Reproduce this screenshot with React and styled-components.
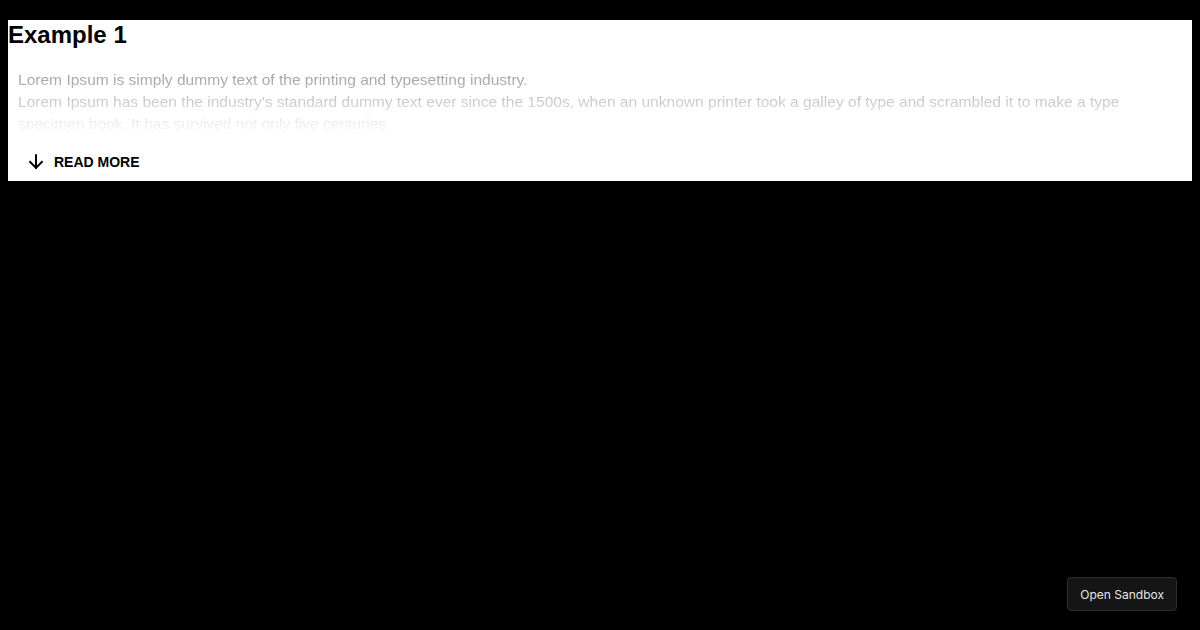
import React from "react";
import styled, { createGlobalStyle } from "styled-components";

const Global = createGlobalStyle`
  html, body { background: #000; }
  body { margin: 0; padding: 20px 8px 8px; font-family: "Liberation Sans", Arial, sans-serif; }
`;

const Card = styled.section`
  background: #fff;
  display: flex;
  flex-direction: column;
`;

const Title = styled.h2`
  margin: 0;
  font-size: 24px;
  line-height: 30px;
  font-weight: 700;
  color: #000;
`;

const Body = styled.div`
  margin-top: 19px;
  padding: 0 10px;
  font-size: 15.55px;
  line-height: 22px;
  color: #999;
  max-height: 66px;
  overflow: hidden;
  -webkit-mask-image: linear-gradient(to bottom, rgba(0,0,0,1) 0%, rgba(0,0,0,0) 100%);
  mask-image: linear-gradient(to bottom, rgba(0,0,0,1) 0%, rgba(0,0,0,0) 100%);
`;

const Line = styled.p`
  margin: 0;
`;

const MoreButton = styled.button`
  align-self: flex-start;
  margin: 9px 0 1px 10px;
  display: flex;
  align-items: center;
  gap: 8px;
  height: 36px;
  padding: 0 8px;
  border: none;
  background: transparent;
  font-family: "Liberation Sans", Arial, sans-serif;
  font-size: 14px;
  font-weight: 700;
  text-transform: uppercase;
  color: #000;
  cursor: pointer;
`;

const Sandbox = styled.a`
  position: fixed;
  right: 23px;
  bottom: 19px;
  box-sizing: border-box;
  padding: 0 12px;
  height: 34px;
  display: flex;
  align-items: center;
  background: #151515;
  border: 1px solid #2e2e2e;
  border-radius: 4px;
  color: #e6e6e6;
  font-family: Inter, "Liberation Sans", sans-serif;
  font-size: 12px;
  text-decoration: none;
`;

const Arrow = () => (
  <svg width="20" height="20" viewBox="0 0 24 24" fill="none" stroke="#000" strokeWidth="2.4" strokeLinecap="square">
    <path d="M12 4v15" />
    <path d="M5 12l7 7 7-7" />
  </svg>
);

export default function App() {
  return (
    <>
      <Global />
      <Card>
        <Title>Example 1</Title>
        <Body>
          <Line>Lorem Ipsum is simply dummy text of the printing and typesetting industry.</Line>
          <Line>
            Lorem Ipsum has been the industry's standard dummy text ever since the 1500s, when an unknown printer took a galley of type and scrambled it to make a type specimen book. It has survived not only five centuries,
          </Line>
        </Body>
        <MoreButton>
          <Arrow />
          Read more
        </MoreButton>
      </Card>
      <Sandbox href="#">Open Sandbox</Sandbox>
    </>
  );
}
